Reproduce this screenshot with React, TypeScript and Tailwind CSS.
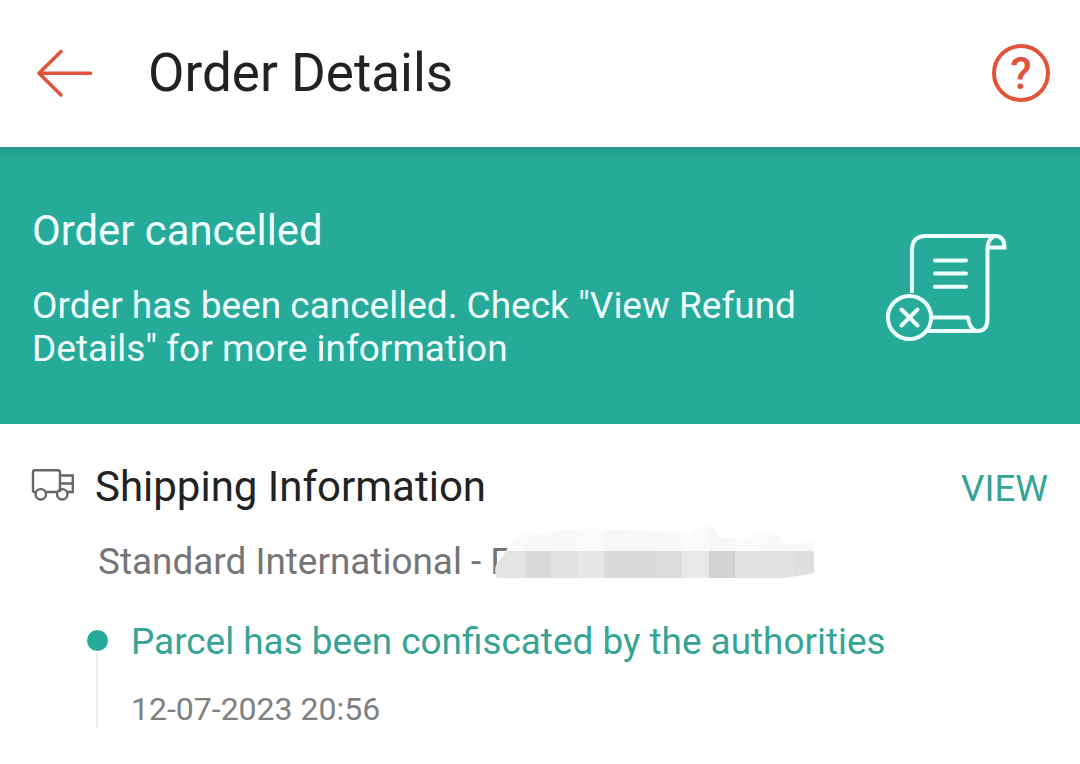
const order = {
  title: "Order cancelled",
  message: ['Order has been cancelled. Check "View Refund', 'Details" for more information'],
  carrier: "Standard International - F",
  status: "Parcel has been confiscated by the authorities",
  time: "12-07-2023 20:56",
};

/* -------------------------------- Icons --------------------------------- */

function BackIcon() {
  return (
    <svg
      width="60"
      height="52"
      viewBox="0 0 60 52"
      fill="none"
      stroke="#e0543a"
      strokeWidth="3.6"
      strokeLinecap="round"
      strokeLinejoin="round"
    >
      <path d="M26 4.500 L4 26.300 L26 48 M4 26.300 H55.500" />
    </svg>
  );
}

function CancelledIcon() {
  return (
    <svg
      width="124"
      height="112"
      viewBox="0 0 124 112"
      fill="none"
      stroke="#ecfffc"
      strokeWidth="4"
      strokeLinecap="round"
      strokeLinejoin="round"
    >
      <path d="M27 62 V19 Q27 5 41 5 H110 Q119.500 5 119.500 16.500 H102.500" strokeLinecap="butt" strokeLinejoin="miter" />
      <path d="M108 6 Q102.800 9 102.500 17 V88 Q102.500 100 92 100 H43" />
      <path d="M48 86.500 H83 Q84.500 98 91.500 100" />
      <path d="M50 29.500 H81 M50 42.500 H81 M50 55.800 H81" />
      <circle cx="24.500" cy="86.500" r="21.600" />
      <path d="M16.500 78.500 L32.500 94.500 M32.500 78.500 L16.500 94.500" />
    </svg>
  );
}

function TruckIcon() {
  return (
    <svg width="44" height="36" viewBox="0 0 44 36" fill="none" stroke="#666" strokeWidth="2.4">
      <path d="M4.500 25 H3.500 Q2 25 2 23.500 V5 Q2 3.200 4 3.200 H27 Q29 3.200 29 5 V25 M15 25 H26 M29 8.500 H41.800 V25 H36.500 M29 16.500 H41.800" />
      <circle cx="9.800" cy="27.300" r="5.200" />
      <circle cx="31.200" cy="27.300" r="5.200" />
    </svg>
  );
}

/* ---------------------------- Hidden tracking ---------------------------- */

const BLOCKS = [
  { x: 0, w: 31, top: "#fafafa", fill: "#e4e4e4" },
  { x: 31, w: 26, top: "#f9f9f9", fill: "#dadada" },
  { x: 57, w: 27, top: "#f8f8f8", fill: "#e2e2e2" },
  { x: 84, w: 26, top: "#fafafa", fill: "#e7e7e7" },
  { x: 110, w: 25, top: "#f7f7f7", fill: "#dadada" },
  { x: 135, w: 27, top: "#f7f7f7", fill: "#d9d9d9" },
  { x: 162, w: 26, top: "#f8f8f8", fill: "#dcdcdc" },
  { x: 188, w: 27, top: "#fafafa", fill: "#e8e8e8" },
  { x: 215, w: 26, top: "#f7f7f7", fill: "#d3d3d3" },
  { x: 241, w: 27, top: "#fafafa", fill: "#e2e2e2" },
  { x: 268, w: 33, top: "#f9f9f9", fill: "#e2e2e2" },
  { x: 301, w: 21, top: "#f8f8f8", fill: "#dfdfdf" },
];

function Mosaic() {
  return (
    <svg className="absolute top-[-16px] left-[396px]" width="322" height="56" viewBox="0 0 322 56">
      {/* the smudge wipes out the arm of the last letter */}
      <rect x="3" y="32" width="12" height="8" fill="#fff" />
      <clipPath id="smudge">
        <path d="M3 54 Q-1 47 3 39 Q8 34 12 27 Q21 12 29 9 Q35 7 44 10 Q75 4 108 5 L188 9 L196 10 Q202 2 211 2 Q221 2 226 14 L254 15 Q263 7 274 7 Q286 8 293 21 L320 18 V49 Q303 52 291 54 Z" />
      </clipPath>
      <g clipPath="url(#smudge)" shapeRendering="crispEdges">
        {BLOCKS.map((b) => (
          <g key={b.x}>
            <rect x={b.x} y="0" width={b.w} height="27" fill={b.top} />
            <rect x={b.x} y="27" width={b.w} height="29" fill={b.fill} />
          </g>
        ))}
      </g>
    </svg>
  );
}

/* -------------------------------- Sections ------------------------------- */

function Header() {
  return (
    <header className="flex h-[147px] items-center bg-white pr-[30px] pb-px pl-[35px]">
      <button type="button" aria-label="Back">
        <BackIcon />
      </button>
      <h1 className="ml-[53px] text-[53px] leading-[60px] whitespace-nowrap text-[#222]">
        Order Details
      </h1>
      <button
        type="button"
        aria-label="Help"
        className="ml-auto grid size-[58px] place-items-center rounded-full border-4 border-[#e0543a] pt-0.5 text-[44px] leading-[48px] font-medium text-[#e0543a]"
      >
        ?
      </button>
    </header>
  );
}

function StatusBanner() {
  return (
    <section className="flex h-[277px] justify-between bg-[#26aa99] bg-linear-to-b from-[#269c8d] to-[#26aa99] to-[14px] pl-8 text-[#f0fffd]">
      <div className="pt-[59px] whitespace-nowrap">
        <h2 className="text-[41.8px] leading-[50px]">{order.title}</h2>
        <p className="mt-7 text-[37px] leading-[43px]">
          {order.message[0]}
          <br />
          {order.message[1]}
        </p>
      </div>
      <div className="mt-[84px] mr-[71px]">
        <CancelledIcon />
      </div>
    </section>
  );
}

function Shipping() {
  return (
    <section className="px-8 pt-[38px]">
      <div className="flex h-[52px] items-start">
        <div className="mt-[5px] -ml-px">
          <TruckIcon />
        </div>
        <h2 className="ml-5 text-[42px] leading-[50px] whitespace-nowrap text-[#222]">
          Shipping Information
        </h2>
        <button type="button" className="mt-0.5 ml-auto text-[36.8px] leading-[50px] text-[#36a494]">
          VIEW
        </button>
      </div>
      <div className="relative mt-[26px] ml-[66px] text-[36.9px] leading-[44px] whitespace-nowrap text-[#757575]">
        {order.carrier}
        <Mosaic />
      </div>
      <div className="mt-[35px] ml-[55px] flex">
        <div className="flex w-[21px] flex-col items-center pt-[11px]">
          <span className="size-[21px] rounded-full bg-[#26aa99]" />
          <span className="mt-0.5 mr-px w-0.5 grow bg-[#ececec]" />
        </div>
        <div className="ml-[23px] whitespace-nowrap">
          <p className="pt-px text-[36.9px] leading-[44px] text-[#36a494]">{order.status}</p>
          <p className="mt-[26px] text-[32px] leading-[38px] text-[#808080]">{order.time}</p>
        </div>
      </div>
    </section>
  );
}

export default function App() {
  return (
    <main className="h-[764px] w-[1080px] overflow-hidden bg-white font-[Roboto,sans-serif]">
      <Header />
      <StatusBanner />
      <Shipping />
    </main>
  );
}
